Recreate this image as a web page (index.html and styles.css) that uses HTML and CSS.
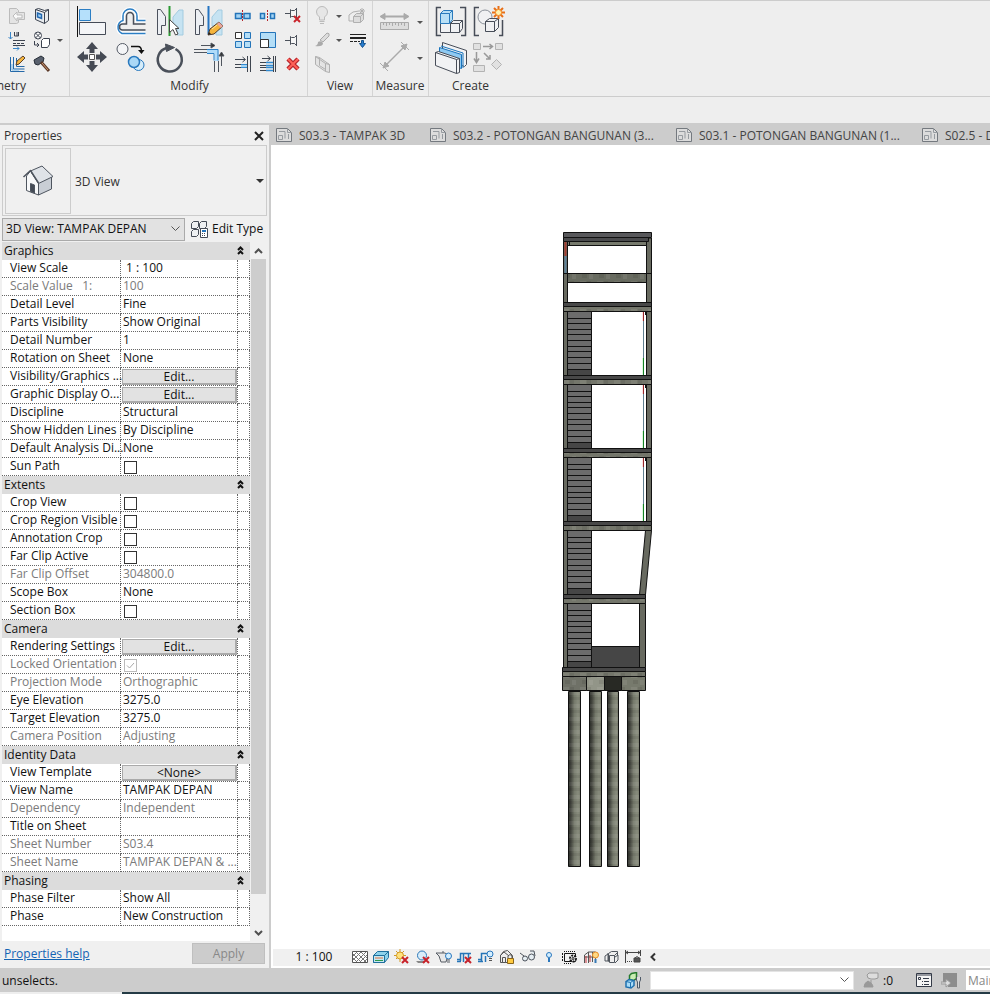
FILE: index.html
```html
<!DOCTYPE html>
<html lang="en">
<head>
<meta charset="utf-8">
<title>3D View: TAMPAK DEPAN</title>
<link rel="stylesheet" href="styles.css">
</head>
<body>
<header class="ribbon">
  <section class="panel panel-geometry">
    <div class="tools tools-geometry">
      <button class="tool" aria-label="Cope" disabled><svg width="25" height="24" fill="none" stroke="#bbb"><path d="M4.500 4.500h7l2 2v2h6v7h-6v3l-2 1h-7z" fill="#e4e4e4"/><path d="M8 12l4-4v3h5v3h-5v3z" fill="#fafafa"/></svg></button>
      <button class="tool" aria-label="Cut"><svg width="25" height="24" fill="none" stroke="#3c4350"><path d="M5.500 5.500l3-1 6 2 4-1v11l-4 3-9-4z" fill="#e9ecef"/><path d="M5.500 5.500l9 3v11M14.500 8.500l4-3"/><path d="M7.500 9l4 1.500v4l-4-1.500z" fill="#9cd0f5" stroke="#2468b0" stroke-width="1.500"/></svg></button>
      <span></span>
      <button class="tool" aria-label="Wall joins"><svg width="25" height="24" fill="none" stroke="#3c4350"><path d="M9.500 4v4h4v-4M12 4v4M8 12.500h12M8 17.500h12"/><path d="M8 15.500h12" stroke-dasharray="3 1"/><path d="M5.500 4v7M3.500 9l2 2 2-2M8 20.500h6M12 18.500l2 2-2 2" stroke="#3b86c8"/></svg></button>
      <button class="tool" aria-label="Join geometry"><svg width="25" height="24" fill="none" stroke="#3c4350"><circle cx="8" cy="7.500" r="3.500" fill="#fff"/><path d="M5.500 5l5 5M10.500 5l-5 5M4.500 13v4h4M7 15l2 2-2 2"/><path d="M11.500 12.500l2-2h6v6l-2 3h-6z" fill="#fff"/></svg></button>
      <button class="caret" aria-label="More join options"></button>
      <button class="tool" aria-label="Beam joins"><svg width="25" height="24" fill="none" stroke="#2468a8"><path d="M5.500 5v14.500h14M8.500 5v12h11M11.500 6v8.500h8" /><path d="M7 12v6h7" stroke="#79b9e8"/><path d="M11 13l1-4 6-5 2 2-6 6z" fill="#f5b53d" stroke="#5b422d"/></svg></button>
      <button class="tool" aria-label="Demolish"><svg width="25" height="24"><path d="M4 8l7-4 3 2-1 4-5 3-3-1z" fill="#59616e" stroke="#252c36"/><path d="M11 10l8 9" stroke="#5b3928" stroke-width="3"/><path d="M12 11l6 7" stroke="#d19a72"/></svg></button>
    </div>
    <h2 class="panel-title">Geometry</h2>
  </section>

  <section class="panel panel-modify">
    <div class="tools tools-large">
      <button class="tool" aria-label="Align"><svg width="39" height="36"><path d="M4.500 2v31" stroke="#111"/><path d="M6.500 5.500h11v11h-11z" fill="#b5e0fb" stroke="#2b7ec4"/><path d="M6.500 18.500h26v12h-26z" fill="#f4f5f7" stroke="#454b57"/></svg></button>
      <button class="tool" aria-label="Offset"><svg width="39" height="36" fill="none"><path d="M33.500 16.500H25V12a7 7 0 0 0-14 0v4.500a7 7 0 0 0-1 13h23.500" stroke="#fff" stroke-width="4"/><path d="M33.500 16.500H25V12a7 7 0 0 0-14 0v4.500a7 7 0 0 0-1 13h23.500" stroke="#2b7ec4" stroke-width="1.500"/><path d="M33.500 20h-12v-8a3.500 3.500 0 0 0-7 0v8h-4a3 3 0 0 0 0 6h23" stroke="#4a505b" stroke-width="1.500"/></svg></button>
      <button class="tool" aria-label="Mirror - Pick Axis"><svg width="39" height="36"><path d="M6.500 5.500h3l5 7v9h-4v9h-4z" fill="#eceff3" stroke="#4b515d"/><path d="M32 6h-4l-6 7v9h4v9h6z" fill="#c6e3f2" stroke="#a2cbe0"/><path d="M18.500 2v30" stroke="#2b9a32" stroke-width="2"/><path d="M18.500 15.500v13l3.500-3 2.500 5.500 2.500-1-2.500-5.500h3.500z" fill="#fff" stroke="#444"/></svg></button>
      <button class="tool" aria-label="Mirror - Draw Axis"><svg width="39" height="36"><path d="M5.500 5.500h3l5 7v9h-4v9h-4z" fill="#eceff3" stroke="#4b515d"/><path d="M32 6h-4l-6 7v9h4v9h6z" fill="#c6e3f2" stroke="#a2cbe0"/><path d="M18.500 2v28" stroke="#2474c2" stroke-width="2"/><path d="M18 31l2-6 9-7 4 4-9 8z" fill="#f4b43c" stroke="#503b2d"/><path d="M29 18l4 4-2 2-4-4z" fill="#e8a7a0"/><path d="M18 31l1-3 2 2z" fill="#222"/><path d="M22 25l5-4" stroke="#ffe9a0"/></svg></button>
      <button class="tool" aria-label="Move"><svg width="39" height="36" fill="#454a54"><path d="M19 2l6 7h-3.500v4h-5V9H13zM19 32l6-7h-3.500v-4h-5v4H13zM4 17l7-6v3.500h4v5h-4V23zM34 17l-7-6v3.500h-4v5h4V23z"/><path d="M16.500 14.500h5v5h-5z" fill="#fff" stroke="#555"/></svg></button>
      <button class="tool" aria-label="Copy"><svg width="39" height="36" fill="none"><circle cx="10.500" cy="9" r="5.500" fill="#f4f5f7" stroke="#555b66"/><path d="M19 6.500h7q3.500 0 3.500 5" stroke="#111" stroke-width="1.500"/><path d="M26 10l3.500 4 3-4z" fill="#111"/><circle cx="26.500" cy="25" r="5.500" fill="#d6edfa" stroke="#2878bd"/><circle cx="22" cy="22" r="5.500" fill="#a9d8f6" stroke="#2878bd" stroke-width="1.500"/></svg></button>
      <button class="tool" aria-label="Rotate"><svg width="39" height="36" fill="none"><path d="M24.500 9a12 12 0 1 1-9-1" stroke="#4a505a" stroke-width="2.500"/><path d="M14.500 4l9 3.500-8 4z" fill="#4a505a" stroke="#4a505a"/></svg></button>
      <button class="tool" aria-label="Trim to Corner"><svg width="39" height="36" fill="none" stroke="#50565f"><path d="M17 11h9.500v10" stroke="#b0dcfa" stroke-width="4"/><path d="M17 9.500h11v11M17 13.500h7v7" stroke="#2e82c8"/><path d="M4 9.500h13M4 12.500h13M24.500 21v11M28.500 21v11M11 5.500h12M31.500 26V14"/><path d="M21 3l4 2.500-4 2.500zM29 16l2.500-4 2.500 4z" fill="#333"/></svg></button>
    </div>
    <div class="tools tools-small">
      <button class="tool" aria-label="Split Element"><svg width="25" height="24" fill="#a4d4f4" stroke="#2474b9" stroke-width="1.500"><path d="M4.500 9.500h6v5h-6zM13 9.500h6v5h-6z"/><path d="M11.500 6v12" stroke="#b3252b" stroke-width="1" stroke-dasharray="2 1"/></svg></button>
      <button class="tool" aria-label="Split with Gap"><svg width="25" height="24" fill="#a4d4f4" stroke="#2474b9" stroke-width="1.500"><path d="M4.500 9.500h4v5h-4zM14.500 9.500h4v5h-4z"/><path d="M11.500 6v12" stroke="#b3252b" stroke-width="1" stroke-dasharray="2 1"/></svg></button>
      <button class="tool" aria-label="Unpin"><svg width="25" height="24" fill="#f6f6f6" stroke="#4b515b"><path d="M4 9.500h5" /><path d="M9.500 5.500l1 1h3l2-2v10l-2-2h-3l-1 1zM15.500 4v11"/><path d="M13 12l6 6M19 12l-6 6" stroke="#c9232b" stroke-width="2"/></svg></button>
      <button class="tool" aria-label="Array"><svg width="25" height="24" fill="#b4def7" stroke="#2474b9"><path d="M4.500 4.500h6v6h-6z" fill="#fff" stroke="#333"/><path d="M13.500 4.500h6v6h-6zM4.500 13.500h6v6h-6zM13.500 13.500h6v6h-6z"/></svg></button>
      <button class="tool" aria-label="Scale"><svg width="25" height="24"><path d="M4.500 4.500h15v15h-15z" fill="#b4def7" stroke="#2474b9"/><path d="M4.500 11.500h8v8h-8z" fill="#fff" stroke="#333"/></svg></button>
      <button class="tool" aria-label="Pin"><svg width="25" height="24" fill="#f6f6f6" stroke="#4b515b"><path d="M4 12.500h5"/><path d="M9.500 8.500l1 1h3l2-2v10l-2-2h-3l-1 1zM15.500 7v11"/></svg></button>
      <button class="tool" aria-label="Trim Single Element"><svg width="25" height="24" fill="none" stroke="#3e454f"><path d="M4 7.500h10M11.500 5l3 2.500-3 2.500M16.500 4v16M19.500 4v16M4 12.500h7M4 15.500h7"/><path d="M10 12.500h6M10 15.500h6" stroke="#318bd2"/><path d="M10 14h6" stroke="#a4d4f4" stroke-width="2"/></svg></button>
      <button class="tool" aria-label="Trim Multiple Elements"><svg width="25" height="24" fill="none" stroke="#3e454f"><path d="M6 6.500h8M11.500 4l3 2.500-3 2.500M17.500 4v16M19.500 4v16M4 10.500h7M4 13.500h7M4 15.500h7M4 18.500h7"/><path d="M10 10.500h7M10 13.500h7M10 15.500h7M10 18.500h7" stroke="#318bd2" stroke-width="1.500"/></svg></button>
      <button class="tool" aria-label="Delete"><svg width="25" height="24"><path d="M7 7l10 10M17 7L7 17" stroke="#b7242b" stroke-width="4.500"/><path d="M7 7l10 10M17 7L7 17" stroke="#ff6158" stroke-width="2"/></svg></button>
    </div>
    <h2 class="panel-title">Modify</h2>
  </section>

  <section class="panel panel-view">
    <div class="tools tools-view">
      <button class="tool" aria-label="Hide in View" disabled><svg width="24" height="24" fill="#e6e6e6" stroke="#bbb"><path d="M9.500 16v-3q-3-2-3-5a5.500 5.500 0 0 1 11 0q0 3-3 5v3zM9.500 17.500h5M10 19.500h4"/></svg></button>
      <button class="caret" aria-label="Hide options"></button>
      <button class="tool" aria-label="Displace Elements" disabled><svg width="28" height="24" fill="#ddd" stroke="#b0b0b0"><path d="M10.500 12.500l3-3h7v6l-3 3h-7zM10.500 12.500h7v6M17.500 12.500l3-3"/><path d="M10 17H6v-6l4-3 6-1M19 4v6M16 7h6M17 5l4 4M21 5l-4 4" fill="none"/></svg></button>
      <button class="tool" aria-label="Override Graphics" disabled><svg width="24" height="24" fill="#aaa"><path d="M10 12l7-7q3 0 2 3l-6 6z" fill="#ddd" stroke="#aaa"/><path d="M5 18q3-1 3-4 3-2 5 1 0 4-8 3z"/></svg></button>
      <button class="caret" aria-label="Override options"></button>
      <button class="tool" aria-label="Linework"><svg width="28" height="24"><path d="M7 6.500h16M7 13.500h3M11 13.500h3M15 13.500h2" stroke="#222"/><path d="M7 10h16" stroke="#222" stroke-width="2"/><path d="M18.500 12.500h2v3h2l-3 4-3-4h2z" fill="#267dd0" stroke="#15538f"/></svg></button>
      <button class="tool" aria-label="Selection Box" disabled><svg width="24" height="24" fill="#e3e3e3" stroke="#b0b0b0"><path d="M5.500 4.500l4 1 10 7v8l-4-1-10-7zM5.500 4.500l10 7v8M15.500 11.500l4 1M9.500 5.500v8l6 4"/></svg></button>
    </div>
    <h2 class="panel-title">View</h2>
  </section>

  <section class="panel panel-measure">
    <div class="tools tools-measure">
      <button class="tool" aria-label="Measure" disabled><svg width="42" height="36" fill="#aaa" stroke="#aaa"><path d="M8 12.500h25" stroke-width="2"/><path d="M6 12.500l5-3v6zM35 12.500l-5-3v6z"/><path d="M6.500 18.500h28v7h-28z" fill="#ddd"/><path d="M9.500 19v2M12.500 19v3M15.500 19v2M18.500 19v3M21.500 19v2M24.500 19v3M27.500 19v2M30.500 19v3"/></svg></button>
      <button class="caret" aria-label="Measure options"></button>
      <button class="tool" aria-label="Aligned Dimension" disabled><svg width="42" height="36" fill="#aaa" stroke="#aaa"><path d="M11 26L31 6" stroke-width="1.500"/><path d="M9 28l2-6 4 4zM33 4l-6 2 4 4z"/><path d="M6 23l8 8M27 2l8 8"/></svg></button>
      <button class="caret" aria-label="Dimension options"></button>
    </div>
    <h2 class="panel-title">Measure</h2>
  </section>

  <section class="panel panel-create">
    <div class="tools tools-create">
      <button class="tool" aria-label="Create Assembly"><svg width="38" height="36" fill="#f0f1f3" stroke="#474d58"><path d="M9 3.500H4.500v28H9M28 3.500h5.500v28H29" fill="none" stroke-width="1.500"/><path d="M18.500 19.500l3-3h9v8l-3 4h-9z"/><path d="M8.500 18.500h10v10h-10z"/><path d="M8.500 9.500l3-3h9v9l-3 4h-9z" fill="#b9e0f6" stroke="#2a7abc"/><path d="M8.500 9.500h9v10M17.500 9.500l3-3" fill="none" stroke="#2a7abc"/><path d="M18.500 19.500h9v9M27.500 19.500l3-3" fill="none"/></svg></button>
      <button class="tool" aria-label="Create Group"><svg width="38" height="36" fill="#f0f1f3" stroke="#474d58"><path d="M9 3.500H4.500v28H9M32.500 16v15.500H29" fill="none" stroke-width="1.500"/><circle cx="15" cy="13" r="7" stroke="#8a9099"/><path d="M15.500 17.500l4-3h9v9l-4 4h-9zM15.500 17.500h9v10M24.500 17.500l4-3"/><path d="M28.500 2v13M22 8.500h13M24 4l9 9M33 4l-9 9" stroke="#e86f17" stroke-width="2"/><circle cx="28.500" cy="8.500" r="3" fill="#fff2b0" stroke="#f58c22"/></svg></button>
      <button class="tool" aria-label="Create Parts"><svg width="38" height="36" fill="#f1f2f4" stroke="#474d58"><path d="M10.500 2.500l24 8v14l-2 2-22-8z"/><path d="M7.500 7.500l22 7v14l-22-7z" fill="#8fcaf2" stroke="#1974bd"/><path d="M9 6l22 7v15" fill="none" stroke="#1974bd"/><path d="M3.500 12.500l3-1 21 7v14l-3 1-21-8z"/><path d="M3.500 12.500l21 7v14M24.500 19.500l3-1" fill="none"/></svg></button>
      <button class="tool" aria-label="Create Similar" disabled><svg width="38" height="36" fill="#e1e1e1" stroke="#b3b3b3"><path d="M3.500 3.500h7v6h-7zM25.500 3.500h7v6h-7zM3.500 25.500h11v6h-11zM26.500 19.500l5 5-5 5-5-5z"/><path d="M13 6.500h10M19.500 4l3 2.500-3 2.500M6.500 12v10M4 18.500l2.500 4 2.500-4M14 13l6 6M20 15v4h-4" stroke="#999" stroke-width="1.500" fill="none"/></svg></button>
    </div>
    <h2 class="panel-title">Create</h2>
  </section>
</header>
<div class="options-bar"></div>

<div class="workspace">
  <aside class="properties">
    <div class="properties-head"><h1>Properties</h1>
      <button class="close" aria-label="Close"><svg width="10" height="10" stroke="#222" stroke-width="2"><path d="M1 1l8 8M9 1L1 9"/></svg></button>
    </div>
    <div class="type-box">
      <div class="type-picture"><svg width="34" height="34" stroke="#4e555f" stroke-linejoin="round"><path d="M5.500 12l4-5 8 12v12l-12-4.500z" fill="#f7f8f9"/><path d="M17.500 19l13-7v13l-13 6z" fill="#c9ced5"/><path d="M9.500 7l11.500-5 11 10.500-14.500 7z" fill="#dfe3e8"/><path d="M2.500 13l7-6.500 8 12.500" fill="none" stroke-width="1.500"/><path d="M9.500 19.500l4 1.500v8l-4-1.500z" fill="#444b56"/></svg></div>
      <span class="type-name">3D View</span>
      <button class="type-caret" aria-label="Change type"></button>
    </div>
    <div class="type-row">
      <select class="view-select" aria-label="Element filter"><option>3D View: TAMPAK DEPAN</option></select>
      <button class="edit-type"><svg width="17" height="17" fill="#eef0f2" stroke="#454b56"><path d="M.5 2.500l2-2h5v5l-2 2h-5zM8.500 2.500l2-2h5v5l-2 2h-5zM.5 10.500l2-2h5v5l-2 2h-5z"/><path d="M9.500 7.500h7v9h-7z" fill="#fff"/><path d="M11 10h4" stroke="#2474bb" stroke-width="2"/><path d="M11 12.500h1M13 12.500h1M11 14.500h1M13 14.500h1"/></svg>Edit Type</button>
    </div>
    <div class="grid-area">
      <table class="props">
        <colgroup><col class="col-name"><col class="col-value"><col class="col-end"></colgroup>
        <tbody>
          <tr class="group"><th colspan="3" scope="rowgroup">Graphics<svg class="fold" width="7" height="9"><path d="M1 4l2.500-2.500L6 4M1 8l2.500-2.500L6 8"/></svg></th></tr>
          <tr><th scope="row">View Scale</th><td>&nbsp;1 : 100</td><td></td></tr>
          <tr class="off"><th scope="row">Scale Value &nbsp; 1:</th><td>100</td><td></td></tr>
          <tr><th scope="row">Detail Level</th><td>Fine</td><td></td></tr>
          <tr><th scope="row">Parts Visibility</th><td>Show Original</td><td></td></tr>
          <tr><th scope="row">Detail Number</th><td>1</td><td></td></tr>
          <tr><th scope="row">Rotation on Sheet</th><td>None</td><td></td></tr>
          <tr><th scope="row">Visibility/Graphics ...</th><td class="cell-button"><button>Edit...</button></td><td></td></tr>
          <tr><th scope="row">Graphic Display O...</th><td class="cell-button"><button>Edit...</button></td><td></td></tr>
          <tr><th scope="row">Discipline</th><td>Structural</td><td></td></tr>
          <tr><th scope="row">Show Hidden Lines</th><td>By Discipline</td><td></td></tr>
          <tr><th scope="row">Default Analysis Di...</th><td>None</td><td></td></tr>
          <tr><th scope="row"><label for="sun">Sun Path</label></th><td><input type="checkbox" id="sun"></td><td></td></tr>
        </tbody>
        <tbody>
          <tr class="group"><th colspan="3" scope="rowgroup">Extents<svg class="fold" width="7" height="9"><path d="M1 4l2.500-2.500L6 4M1 8l2.500-2.500L6 8"/></svg></th></tr>
          <tr><th scope="row"><label for="crop">Crop View</label></th><td><input type="checkbox" id="crop"></td><td></td></tr>
          <tr><th scope="row"><label for="region">Crop Region Visible</label></th><td><input type="checkbox" id="region"></td><td></td></tr>
          <tr><th scope="row"><label for="annotation">Annotation Crop</label></th><td><input type="checkbox" id="annotation"></td><td></td></tr>
          <tr><th scope="row"><label for="far">Far Clip Active</label></th><td><input type="checkbox" id="far"></td><td></td></tr>
          <tr class="off"><th scope="row">Far Clip Offset</th><td>304800.0</td><td></td></tr>
          <tr><th scope="row">Scope Box</th><td>None</td><td></td></tr>
          <tr><th scope="row"><label for="section">Section Box</label></th><td><input type="checkbox" id="section"></td><td></td></tr>
        </tbody>
        <tbody>
          <tr class="group"><th colspan="3" scope="rowgroup">Camera<svg class="fold" width="7" height="9"><path d="M1 4l2.500-2.500L6 4M1 8l2.500-2.500L6 8"/></svg></th></tr>
          <tr><th scope="row">Rendering Settings</th><td class="cell-button"><button>Edit...</button></td><td></td></tr>
          <tr class="off"><th scope="row"><label for="locked">Locked Orientation</label></th><td><input type="checkbox" id="locked" checked disabled></td><td></td></tr>
          <tr class="off"><th scope="row">Projection Mode</th><td>Orthographic</td><td></td></tr>
          <tr><th scope="row">Eye Elevation</th><td>3275.0</td><td></td></tr>
          <tr><th scope="row">Target Elevation</th><td>3275.0</td><td></td></tr>
          <tr class="off"><th scope="row">Camera Position</th><td>Adjusting</td><td></td></tr>
        </tbody>
        <tbody>
          <tr class="group"><th colspan="3" scope="rowgroup">Identity Data<svg class="fold" width="7" height="9"><path d="M1 4l2.500-2.500L6 4M1 8l2.500-2.500L6 8"/></svg></th></tr>
          <tr><th scope="row">View Template</th><td class="cell-button"><button>&lt;None&gt;</button></td><td></td></tr>
          <tr><th scope="row">View Name</th><td>TAMPAK DEPAN</td><td></td></tr>
          <tr class="off"><th scope="row">Dependency</th><td>Independent</td><td></td></tr>
          <tr><th scope="row">Title on Sheet</th><td></td><td></td></tr>
          <tr class="off"><th scope="row">Sheet Number</th><td>S03.4</td><td></td></tr>
          <tr class="off"><th scope="row">Sheet Name</th><td>TAMPAK DEPAN &amp; ...</td><td></td></tr>
        </tbody>
        <tbody>
          <tr class="group"><th colspan="3" scope="rowgroup">Phasing<svg class="fold" width="7" height="9"><path d="M1 4l2.500-2.500L6 4M1 8l2.500-2.500L6 8"/></svg></th></tr>
          <tr><th scope="row">Phase Filter</th><td>Show All</td><td></td></tr>
          <tr><th scope="row">Phase</th><td>New Construction</td><td></td></tr>
        </tbody>
      </table>
      <div class="scrollbar">
        <button aria-label="Scroll up"><svg width="9" height="6" fill="none" stroke="#505050" stroke-width="2"><path d="M1 5l3.500-3.500L8 5"/></svg></button>
        <div class="thumb"></div>
        <button aria-label="Scroll down"><svg width="9" height="6" fill="none" stroke="#505050" stroke-width="2"><path d="M1 1l3.500 3.500L8 1"/></svg></button>
      </div>
    </div>
    <div class="properties-foot"><a href="#help">Properties help</a><button class="apply" disabled>Apply</button></div>
  </aside>

  <main class="view">
    <nav class="tabs">
      <a class="tab tab-short" href="#s033"><svg width="16" height="14" fill="none" stroke="#74797f"><path d="M.5.5h11l4 4v9H.5z" fill="#dcdcdc"/><path d="M11.500.5v4h4M3 3.500h6v7M2.500 7.500h4v4h-4zM12.500 6v5" stroke="#969ba0"/></svg><span>S03.3 - TAMPAK 3D</span></a>
      <a class="tab" href="#s032"><svg width="16" height="14" fill="none" stroke="#74797f"><path d="M.5.5h11l4 4v9H.5z" fill="#dcdcdc"/><path d="M11.500.5v4h4M3 3.500h6v7M2.500 7.500h4v4h-4zM12.500 6v5" stroke="#969ba0"/></svg><span>S03.2 - POTONGAN BANGUNAN (3...</span></a>
      <a class="tab" href="#s031"><svg width="16" height="14" fill="none" stroke="#74797f"><path d="M.5.5h11l4 4v9H.5z" fill="#dcdcdc"/><path d="M11.500.5v4h4M3 3.500h6v7M2.500 7.500h4v4h-4zM12.500 6v5" stroke="#969ba0"/></svg><span>S03.1 - POTONGAN BANGUNAN (1...</span></a>
      <a class="tab" href="#s025"><svg width="16" height="14" fill="none" stroke="#74797f"><path d="M.5.5h11l4 4v9H.5z" fill="#dcdcdc"/><path d="M11.500.5v4h4M3 3.500h6v7M2.500 7.500h4v4h-4zM12.500 6v5" stroke="#969ba0"/></svg><span>S02.5 - D</span></a>
    </nav>
    <div class="canvas">
      <svg width="91" height="636" viewBox="562 232 91 636" role="img" aria-label="Front elevation">
        <defs>
          <linearGradient id="pile"><stop offset="0" stop-color="#2c2e29"/><stop offset=".2" stop-color="#43453e"/><stop offset=".5" stop-color="#767a6c"/><stop offset=".8" stop-color="#888c7d"/><stop offset="1" stop-color="#757869"/></linearGradient>
          <pattern id="bands" width="24" height="13" patternUnits="userSpaceOnUse"><path d="M0 2h24v4H0z" fill="#fff" opacity=".07"/><path d="M0 8h24v3H0z" fill="#000" opacity=".07"/></pattern>
          <pattern id="mottle" width="17" height="14" patternUnits="userSpaceOnUse"><path d="M2 1h6v5H2zM11 8h4v5h-4z" fill="#fff" opacity=".07"/><path d="M9 1h4v5H9zM4 8h5v4H4z" fill="#000" opacity=".08"/></pattern>
          <g id="stairs" stroke="#111">
            <path d="M567.500 311.500h24v64h-24z" fill="#6c6c6c"/>
            <path d="M567.500 369.500h24v6h-24z" fill="#464646"/>
            <path d="M568 318.500h23M568 323.500h23M568 329.500h23M568 334.500h23M568 340.500h23M568 346.500h23M568 351.500h23M568 357.500h23M568 363.500h23"/>
          </g>
          <g id="slab" stroke="#111"><path d="M563.500 302.500h88v4h-88z" fill="#484848"/><path d="M563.500 306.500h88v5h-88z" fill="#74766b"/></g>
          <g id="guides" fill="none"><path d="M642.500 312v9" stroke="#fbe3e3"/><path d="M642.500 358v17" stroke="#def7de"/><path d="M643.500 312v9" stroke="#98282c"/><path d="M643.500 321v37" stroke="#5f7f90"/><path d="M643.500 358v17" stroke="#168326"/><path d="M645.500 312v3" stroke="#111"/></g>
        </defs>
        <g stroke="#111">
          <path d="M563.500 241.500h4v426h-4z" fill="#686a60"/>
          <path d="M646.500 238h5v284h-5z" fill="#686a60"/>
          <path d="M567.500 241.500h79v4h-79z" fill="#777a6d"/>
          <path d="M567.500 273.500h79v9h-79z" fill="#686b60"/>
          <path d="M563.500 232.500h88v5h-88z" fill="#58585b"/>
          <path d="M563.500 237.500h85v4h-85z" fill="#4a4a4c"/>
          <path d="M569.500 242v3"/><path d="M563.500 273.500h88"/>
        </g>
        <path d="M565.500 242v14" stroke="#a43d31" stroke-width="2"/><path d="M565.500 256v17" stroke="#5e829b" stroke-width="2"/>
        <use href="#stairs"/><use href="#stairs" y="73"/><use href="#stairs" y="146"/><use href="#stairs" y="219"/><use href="#stairs" y="292"/>
        <use href="#guides"/><use href="#guides" y="73"/><use href="#guides" y="146"/>
        <use href="#slab"/><use href="#slab" y="73"/><use href="#slab" y="146"/><use href="#slab" y="219"/>
        <g stroke="#111">
          <path d="M645.500 530.500h6l-6 64h-6z" fill="#686a60"/>
          <path d="M639.500 603.500h6v64h-6z" fill="#686a60"/>
          <path d="M563.500 594.500h82v4h-82z" fill="#484848"/><path d="M563.500 598.500h82v5h-82z" fill="#74766b"/>
          <path d="M591.500 646.500h48v21h-48z" fill="#464646"/>
          <path d="M562.500 667.500h83v4h-83z" fill="#484848"/><path d="M562.500 671.500h83v5h-83z" fill="#74766b"/>
        </g>
        <g fill="url(#pile)" stroke="#111"><path d="M568.500 691.500h12v175h-12z"/><path d="M589.500 691.500h12v175h-12z"/><path d="M607.500 691.500h11v175h-11z"/><path d="M627.500 691.500h12v175h-12z"/></g>
        <path d="M569 692h11v174h-11zM590 692h11v174h-11zM608 692h10v174h-10zM628 692h11v174h-11z" fill="url(#bands)"/>
        <g stroke="#111"><path d="M562.500 676.500h24v14h-24z" fill="#6f7167"/><path d="M586.500 676.500h18v14h-18z" fill="#929588"/><path d="M604.500 676.500h17v14h-17z" fill="#282924"/><path d="M621.500 676.500h24v14h-24z" fill="#777a6d"/></g>
        <path d="M568 274h78v8h-78zM563 677h23v13h-23zM587 677h17v13h-17zM622 677h23v13h-23zM564 307h87v4h-87zM564 380h87v4h-87zM564 453h87v4h-87zM564 526h87v4h-87zM564 599h81v4h-81zM563 672h82v4h-82z" fill="url(#mottle)"/>
      </svg>
    </div>
    <div class="view-bar">
      <button class="scale">1 : 100</button>
      <button class="mini" aria-label="Detail Level"><svg width="16" height="16"><path d="M.5 2.500h15v11H.5z" fill="#fff" stroke="#555"/><path d="M1 11l8-8M1 7l4-4M4 13L14 3M8 13l7-7M12 13l3-3M4 3l10 10M1 5l8 8M1 9l4 4M9 3l6 6" stroke="#777"/></svg></button>
      <button class="mini" aria-label="Visual Style"><svg width="16" height="16" stroke="#1f6f9c"><path d="M.5 6.500l4-4h11v6l-4 5H.5z" fill="#8ed2eb"/><path d="M.5 6.500h11v7H.5z" fill="#c5e8f2"/><path d="M11.500 6.500l4-4"/><path d="M2 9h8" stroke="#e07040"/><path d="M2 11.500h8" stroke="#2d9a4c"/></svg></button>
      <button class="mini" aria-label="Sun Path Off"><svg width="16" height="16"><path d="M6 0v13M0 6.500h12M2 2l8 8M10 2l-8 8" stroke="#d39a26"/><circle cx="6" cy="6.500" r="3.500" fill="#ffe27e" stroke="#d39a26"/><path d="M8 8l6 6M14 8l-6 6" stroke="#c8222a" stroke-width="2"/></svg></button>
      <button class="mini" aria-label="Shadows Off"><svg width="16" height="16"><path d="M1 12h10l-2 2H3z" fill="#888"/><circle cx="7" cy="6.500" r="4.500" fill="#d9edfa" stroke="#2d78b9"/><path d="M8 8l6 6M14 8l-6 6" stroke="#c8222a" stroke-width="2"/></svg></button>
      <button class="mini" aria-label="Render"><svg width="16" height="16" fill="#e8e8e8" stroke="#575d65"><path d="M0 4l3 3 2 6h5l2-7-3-2H5zM7 4V2"/><circle cx="12.500" cy="7" r="3" fill="#d4efff" stroke="#2a77bd"/><path d="M11 11h3M11 13h3"/></svg></button>
      <button class="mini" aria-label="Crop View Off"><svg width="16" height="16" fill="none"><path d="M3.500 12V4.500H14M11.500 5v8M0 10.500h3M0 12.500h4M6.500 5v8" stroke="#2675b8" stroke-width="1.500"/><path d="M8 8l6 6M14 8l-6 6" stroke="#c8222a" stroke-width="2"/></svg></button>
      <button class="mini" aria-label="Crop Region"><svg width="16" height="16" fill="none"><path d="M3.500 12V4.500h6M0 10.500h3M0 12.500h5M7.500 7v6" stroke="#2675b8" stroke-width="1.500"/><circle cx="12" cy="5" r="3" fill="#d4efff" stroke="#2a77bd"/><path d="M11 9.500h3M11 11.500h3" stroke="#555"/></svg></button>
      <button class="mini" aria-label="Lock 3D View"><svg width="16" height="16" fill="#eee" stroke="#555"><path d="M1.500 6.500l3-4 4-1 5 5v7h-12zM1 7l4-4 5 4"/><path d="M3.500 8.500h3v5h-3z"/><path d="M9 9V7q2-3 4 0v2" fill="none"/><path d="M8.500 9.500h6v5h-6z" fill="#ffca3f" stroke="#8a651b"/></svg></button>
      <button class="mini" aria-label="Temporary Hide"><svg width="16" height="16" fill="#e6eef3" stroke="#4c535c"><path d="M0 4l4 3M10 2h4l1 5"/><circle cx="5" cy="9.500" r="2.500"/><circle cx="11.500" cy="8" r="3"/></svg></button>
      <button class="mini" aria-label="Reveal Hidden"><svg width="16" height="16"><circle cx="8" cy="6" r="2.500" fill="#d4efff" stroke="#2a77bd"/><path d="M8 9v4" stroke="#2a77bd" stroke-width="2"/></svg></button>
      <button class="mini" aria-label="Temporary Properties"><svg width="16" height="16" fill="none" stroke="#151515"><path d="M2.500 4.500h11v8h-11z"/><path d="M2 2.500h12M2 14.500h7" stroke-dasharray="1 1"/><path d="M.5 4v9" stroke-dasharray="2 1"/><circle cx="11" cy="9.500" r="3" fill="#fff" stroke-width="2" stroke-dasharray="2 1"/><circle cx="11" cy="9.500" r="1"/></svg></button>
      <button class="mini" aria-label="Analytical Model"><svg width="16" height="16" fill="none" stroke="#555"><path d="M1.500 14V6l4-3h7v11M5.500 3v11M9.500 3v10M1 8h11"/><path d="M3 7v7M7 6v7" stroke="#c5363c"/><circle cx="12.500" cy="6" r="3" fill="#ffd984" stroke="#e78c24"/><path d="M12.500 10v4" stroke="#3679b5" stroke-width="2"/></svg></button>
      <button class="mini" aria-label="Displacement Set"><svg width="16" height="16" fill="#eee" stroke="#50565e"><path d="M4.500 4.500l3-2h6v7l-3 3h-6zM4 4v8H1V7l3-2"/><path d="M5.500 6.500h5v7h-5zM10.500 6.500l3-3M11 8l3-2v5l-3 3"/></svg></button>
      <button class="mini" aria-label="Reveal Constraints"><svg width="16" height="16" fill="none" stroke="#444"><path d="M.5 1v13M15.500 1v6M1 3.500h14M3 2L1 3.500 3 5M13 2l2 1.500L13 5"/><path d="M2 12.500h6" stroke-dasharray="1 1"/><path d="M10 9q2-3 4 0"/><path d="M9 9h6v4H9z" fill="#555"/></svg></button>
      <button class="mini" aria-label="Collapse bar"><svg width="16" height="16" fill="none" stroke="#333" stroke-width="2"><path d="M9 4.500L5.500 8 9 11.500"/></svg></button>
    </div>
  </main>
</div>

<footer class="status">
  <span class="hint">unselects.</span>
  <svg class="workset-icon" width="17" height="17"><path d="M4.500 3.500l2-2 5-1v6l-3 2-4-1z" fill="#c9edb2" stroke="#267a2b" stroke-width="1.500"/><path d="M1 9.500l3-2 5 1v5l-3 2.500-5-1z" fill="#a9dcf8" stroke="#1f70ae" stroke-width="1.500"/><path d="M5.500 10.500v5M1 9.500l4.500 1 3-2" fill="none" stroke="#1f70ae"/><path d="M11.500 5v3l1 2v6h2v-6l1-2V5" fill="#ddd" stroke="#4e5a68"/></svg>
  <select class="workset" aria-label="Active workset"><option></option></select>
  <span class="requests"><svg width="16" height="16" fill="#ddd" stroke="#999"><path d="M4 3l2-2h9v5l-3 1H8L5 6zM8 8v3"/><path d="M1 15q0-4 4-6l3 2q2 2 2 4z" fill="#999"/></svg><span>:0</span></span>
  <button class="mini design" aria-label="Design options"><svg width="16" height="16"><path d="M.5 1.500h15v13H.5z" fill="#f5f5f5" stroke="#343b48"/><path d="M1 3h14" stroke="#343b48" stroke-width="1"/><path d="M2.500 5.500h2v2h-2zM7 6.500h6M6 9.500h1M8 9.500h5M6 12.500h1M8 12.500h5" stroke="#343b48" fill="none"/></svg></button>
  <button class="mini exclude" aria-label="Add to set" disabled><svg width="16" height="16"><path d="M2 1h14v14H7v-3H2z" fill="#8d8d8d"/><path d="M0 10h5V7l5 4-5 4v-3H0z" fill="#ddd" stroke="#999"/></svg></button>
  <input class="option" aria-label="Design option" value="Main Model" readonly>
</footer>
<div class="taskbar"></div>
</body>
</html>
```
FILE: styles.css
```css
* { box-sizing: border-box; }
body {
  margin: 0;
  height: 100vh;
  display: flex;
  flex-direction: column;
  overflow: hidden;
  background: #eee;
  color: #111;
  font: 12px/16px "Open Sans", "Noto Sans", sans-serif;
}
button, input, select { font: inherit; color: inherit; margin: 0; }
button { padding: 0; border: 0; background: none; }
svg { display: block; flex: none; }
h1, h2 { margin: 0; font-size: 12px; font-weight: 400; }

/* Ribbon */
.ribbon { display: flex; height: 97px; border-top: 1px solid #ccc; border-bottom: 1px solid #ccc; flex: none; }
.panel {
  display: grid;
  grid-template-columns: minmax(0, 1fr);
  grid-template-rows: 72px 20px;
  padding-top: 3px;
  padding-right: 2px;
  border-right: 1px solid #d4d4d4;
  overflow: hidden;
}
.panel-title { grid-column: 1 / -1; line-height: 20px; text-align: center; color: #333; }
.tools { display: grid; align-content: start; justify-content: start; }
.tool { display: block; }
.caret { display: flex; align-items: center; justify-content: center; }
.caret::before, .type-caret::before {
  content: "";
  border: 3px solid transparent;
  border-top-color: #555;
  border-bottom: 0;
}
.panel-geometry { width: 70px; padding-left: 5px; }
.panel-geometry .panel-title { display: flex; justify-content: flex-end; padding-right: 41px; }
.tools-geometry { grid-template-columns: 25px 25px 9px; grid-auto-rows: 24px; }
.panel-modify { grid-template-columns: 158px 1fr; width: 238px; padding-left: 3px; }
.tools-large { grid-template-columns: repeat(4, 39px); grid-auto-rows: 36px; }
.tools-small { grid-template-columns: repeat(3, 25px); grid-auto-rows: 24px; }
.panel-view { width: 65px; padding-left: 2px; }
.tools-view { grid-template-columns: 24px 9px 28px; grid-auto-rows: 24px; }
.panel-measure { width: 56px; padding-left: 1px; }
.tools-measure { grid-template-columns: 42px 8px; grid-auto-rows: 36px; }
.panel-create { width: 82px; padding-left: 3px; border-right: 0; }
.tools-create { grid-template-columns: 38px 38px; grid-auto-rows: 36px; }
.options-bar { height: 28px; flex: none; border-bottom: 2px solid #ccc; }

/* Properties palette */
.workspace { flex: 1; display: flex; min-height: 0; }
.properties {
  flex: none;
  width: 271px;
  padding: 0 2px;
  display: flex;
  flex-direction: column;
  background: #f0f0f0;
  border-right: 2px solid #ccc;
}
.properties-head { display: flex; align-items: center; justify-content: space-between; height: 20px; padding: 2px 3px 0 2px; color: #333; }
.type-box { display: flex; align-items: center; height: 71px; padding: 2px; border: 1px solid #ccc; color: #333; }
.type-picture { display: flex; align-items: center; justify-content: center; width: 66px; height: 66px; border: 1px solid #ccc; }
.type-name { flex: 1; padding: 2px 0 0 4px; }
.type-caret { display: flex; }
.type-caret::before { border-width: 4px; border-bottom: 0; border-top-color: #333; }
.type-row { display: flex; align-items: center; gap: 6px; height: 26px; }
.view-select, .workset {
  appearance: none;
  border: 1px solid #aaa;
  border-radius: 0;
  background: #e2e2e2 url("data:image/svg+xml,%3Csvg xmlns='http://www.w3.org/2000/svg' width='9' height='6' fill='none' stroke='%23555'%3E%3Cpath d='M.5.5l4 4 4-4'/%3E%3C/svg%3E") no-repeat right 4px center;
}
.view-select { width: 183px; height: 23px; padding: 0 16px 0 3px; }
.edit-type { display: flex; align-items: center; gap: 4px; }
.grid-area { flex: 1; min-height: 0; display: flex; align-items: stretch; background: #fff; }
.props { flex: none; align-self: flex-start; width: 248px; table-layout: fixed; border-collapse: separate; border-spacing: 0; }
.col-name { width: 119px; }
.col-value { width: 117px; }
.col-end { width: 12px; }
.props th, .props td {
  height: 18px;
  padding: 0 0 1px 2px;
  border-right: 1px dotted #666;
  border-bottom: 1px dotted #666;
  text-align: left;
  font-weight: 400;
  line-height: 16px;
  white-space: nowrap;
}
.props th { padding-left: 8px; }
.props .group th { padding: 0 6px 0 2px; border: 0; background: #dcdcdc; line-height: 18px; }
.off { color: #7b7b7b; }
.fold { float: right; margin-top: 4px; fill: none; stroke: #111; stroke-width: 2; }
.props .cell-button { padding: 0 0 0 1px; }
.cell-button button { display: block; width: 100%; height: 16px; border: 1px solid #aaa; border-right-width: 2px; border-bottom-width: 2px; background: #e2e2e2; line-height: 13px; }
.props input { appearance: none; display: block; width: 13px; height: 13px; margin: 3px 0 0 1px; border: 1px solid #333; background: #fff; }
.props input:disabled { border-color: #bbb; }
.props input:checked { background: #fff url("data:image/svg+xml,%3Csvg xmlns='http://www.w3.org/2000/svg' width='11' height='11' fill='none' stroke='%23aaa'%3E%3Cpath d='M2 5.500l2.500 2.500L9 3'/%3E%3C/svg%3E"); }
.scrollbar { flex: 1; display: flex; flex-direction: column; padding: 0 1px; background: #f0f0f0; }
.scrollbar button { display: flex; align-items: center; justify-content: center; height: 17px; flex: none; }
.thumb { height: 635px; background: #cdcdcd; }
.scrollbar button:last-child { margin-top: auto; }
.properties-foot { flex: none; display: flex; align-items: center; justify-content: space-between; height: 27px; padding: 0 2px 2px 2px; }
.properties-foot a { color: #1464b4; }
.apply { width: 73px; height: 21px; border: 1px solid #bfbfbf; background: #ccc; color: #888; }

/* Drawing area */
.view { flex: 1; min-width: 0; display: flex; flex-direction: column; background: #fff; }
.tabs { flex: none; display: flex; height: 20px; padding-left: 5px; background: #ccc; overflow: hidden; }
.tab { flex: none; display: flex; align-items: center; gap: 7px; width: 246px; color: #444; text-decoration: none; white-space: nowrap; }
.tab-short { width: 154px; }
.tab span, .hint, .requests span { padding-top: 2px; }
.canvas { flex: 1; min-height: 0; display: flex; justify-content: center; align-items: flex-start; padding: 87px 47px 0 0; }
.view-bar { flex: none; display: flex; align-items: flex-start; height: 17px; margin: 0 0 2px 2px; background: #f0f0f0; }
.scale { width: 76px; padding-left: 6px; }
.mini { display: flex; align-items: center; justify-content: center; width: 21px; height: 16px; flex: none; }

/* Status bar */
.status { flex: none; display: flex; align-items: center; height: 24px; background: #ccc; overflow: hidden; }
.hint { width: 625px; padding-left: 2px; flex: none; }
.workset-icon { margin-right: 8px; }
.workset { flex: none; width: 204px; height: 19px; border-color: #e4e4e4; background-color: #fff; }
.requests { display: flex; gap: 4px; width: 59px; padding-left: 9px; flex: none; align-items: center; }
.design { width: 22px; }
.exclude { width: 27px; }
.option { flex: 1 0 86px; height: 20px; margin-left: 4px; padding: 0 2px; border: 0; background: #fff; color: #888; }
.taskbar { flex: none; height: 2px; background: linear-gradient(90deg, #eee 122px, #243b45 122px); }
```
